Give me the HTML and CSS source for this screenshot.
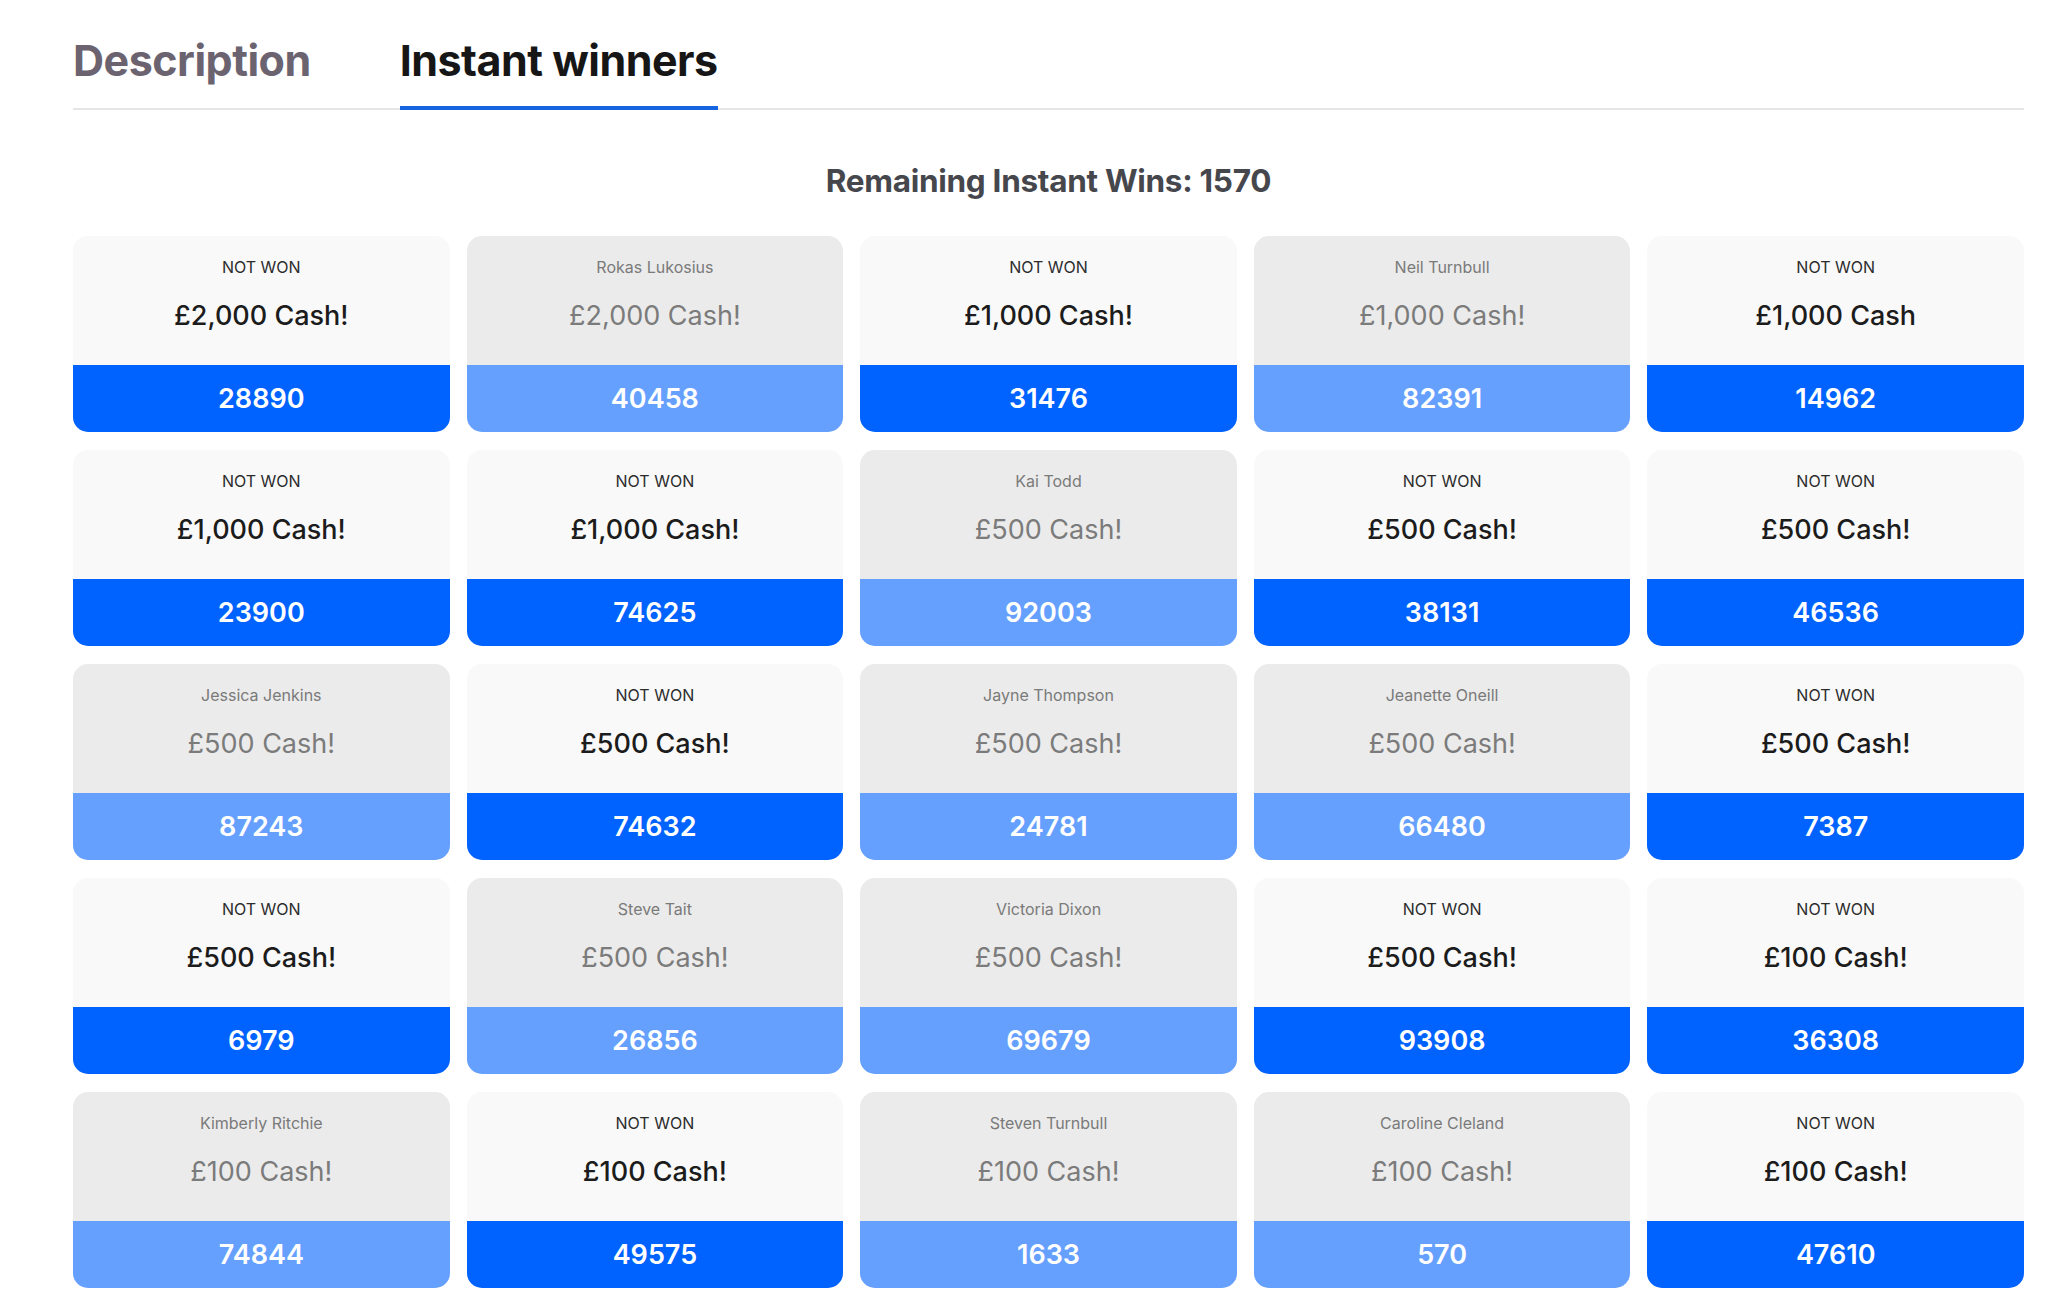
FILE: index.html
```html
<!doctype html>
<html>
	<head>
		<meta charset="UTF-8">
		<title>Instant winners</title>
		<link rel="stylesheet" href="styles.css">
	</head>
	<body>
		<div class="page">
			<div class="tabs">
				<div class="tab">Description</div>
				<div class="tab active">Instant winners</div>
			</div>
			<h2 class="remaining">Remaining Instant Wins: 1570</h2>
			<div class="grid">
				<div class="card"><div class="top"><div class="who">NOT WON</div><div class="prize">£2,000 Cash!</div></div><div class="num">28890</div></div>
				<div class="card won"><div class="top"><div class="who">Rokas Lukosius</div><div class="prize">£2,000 Cash!</div></div><div class="num">40458</div></div>
				<div class="card"><div class="top"><div class="who">NOT WON</div><div class="prize">£1,000 Cash!</div></div><div class="num">31476</div></div>
				<div class="card won"><div class="top"><div class="who">Neil Turnbull</div><div class="prize">£1,000 Cash!</div></div><div class="num">82391</div></div>
				<div class="card"><div class="top"><div class="who">NOT WON</div><div class="prize">£1,000 Cash</div></div><div class="num">14962</div></div>

				<div class="card"><div class="top"><div class="who">NOT WON</div><div class="prize">£1,000 Cash!</div></div><div class="num">23900</div></div>
				<div class="card"><div class="top"><div class="who">NOT WON</div><div class="prize">£1,000 Cash!</div></div><div class="num">74625</div></div>
				<div class="card won"><div class="top"><div class="who">Kai Todd</div><div class="prize">£500 Cash!</div></div><div class="num">92003</div></div>
				<div class="card"><div class="top"><div class="who">NOT WON</div><div class="prize">£500 Cash!</div></div><div class="num">38131</div></div>
				<div class="card"><div class="top"><div class="who">NOT WON</div><div class="prize">£500 Cash!</div></div><div class="num">46536</div></div>

				<div class="card won"><div class="top"><div class="who">Jessica Jenkins</div><div class="prize">£500 Cash!</div></div><div class="num">87243</div></div>
				<div class="card"><div class="top"><div class="who">NOT WON</div><div class="prize">£500 Cash!</div></div><div class="num">74632</div></div>
				<div class="card won"><div class="top"><div class="who">Jayne Thompson</div><div class="prize">£500 Cash!</div></div><div class="num">24781</div></div>
				<div class="card won"><div class="top"><div class="who">Jeanette Oneill</div><div class="prize">£500 Cash!</div></div><div class="num">66480</div></div>
				<div class="card"><div class="top"><div class="who">NOT WON</div><div class="prize">£500 Cash!</div></div><div class="num">7387</div></div>

				<div class="card"><div class="top"><div class="who">NOT WON</div><div class="prize">£500 Cash!</div></div><div class="num">6979</div></div>
				<div class="card won"><div class="top"><div class="who">Steve Tait</div><div class="prize">£500 Cash!</div></div><div class="num">26856</div></div>
				<div class="card won"><div class="top"><div class="who">Victoria Dixon</div><div class="prize">£500 Cash!</div></div><div class="num">69679</div></div>
				<div class="card"><div class="top"><div class="who">NOT WON</div><div class="prize">£500 Cash!</div></div><div class="num">93908</div></div>
				<div class="card"><div class="top"><div class="who">NOT WON</div><div class="prize">£100 Cash!</div></div><div class="num">36308</div></div>

				<div class="card won"><div class="top"><div class="who">Kimberly Ritchie</div><div class="prize">£100 Cash!</div></div><div class="num">74844</div></div>
				<div class="card"><div class="top"><div class="who">NOT WON</div><div class="prize">£100 Cash!</div></div><div class="num">49575</div></div>
				<div class="card won"><div class="top"><div class="who">Steven Turnbull</div><div class="prize">£100 Cash!</div></div><div class="num">1633</div></div>
				<div class="card won"><div class="top"><div class="who">Caroline Cleland</div><div class="prize">£100 Cash!</div></div><div class="num">570</div></div>
				<div class="card"><div class="top"><div class="who">NOT WON</div><div class="prize">£100 Cash!</div></div><div class="num">47610</div></div>
			</div>
		</div>
	</body>
</html>
```

FILE: styles.css
```css
body{
	margin:0;
	background:#fff;
	font-family:Inter,"Noto Sans",sans-serif;
}
.page{padding:0 24px 40px 73px}

.tabs{
	display:flex;
	gap:89px;
	padding-top:35px;
	border-bottom:2px solid #e6e6e6;
}
.tab{
	font-size:43px;
	line-height:50px;
	font-weight:700;
	color:#6b6470;
	padding-bottom:23px;
	letter-spacing:-0.5px;
}
.tab.active{
	color:#161616;
	border-bottom:4px solid #1565e0;
	margin-bottom:-2px;
	padding-bottom:21px;
}

.remaining{
	margin:52px 0 36px;
	text-align:center;
	font-size:31.5px;
	line-height:38px;
	font-weight:700;
	color:#46474d;
	letter-spacing:-0.3px;
}

.grid{
	display:grid;
	grid-template-columns:repeat(5,1fr);
	column-gap:17px;
	row-gap:18px;
}
.card{
	border-radius:15px;
	overflow:hidden;
	background:#f9f9f9;
	text-align:center;
}
.card .top{height:108px;padding-top:21px}
.who{font-size:16px;line-height:20px;color:#2c2c2c}
.prize{margin-top:22px;font-size:27px;line-height:34px;font-weight:500;color:#1c1c1c}
.num{
	height:67px;
	line-height:67px;
	background:#0062ff;
	color:#fff;
	font-size:27px;
	font-weight:600;
}
.card.won{background:#ebebeb}
.won .who{color:#7a7a7a}
.won .prize{color:#7b7b7b;font-weight:400}
.won .num{background:#66a0ff}
```
